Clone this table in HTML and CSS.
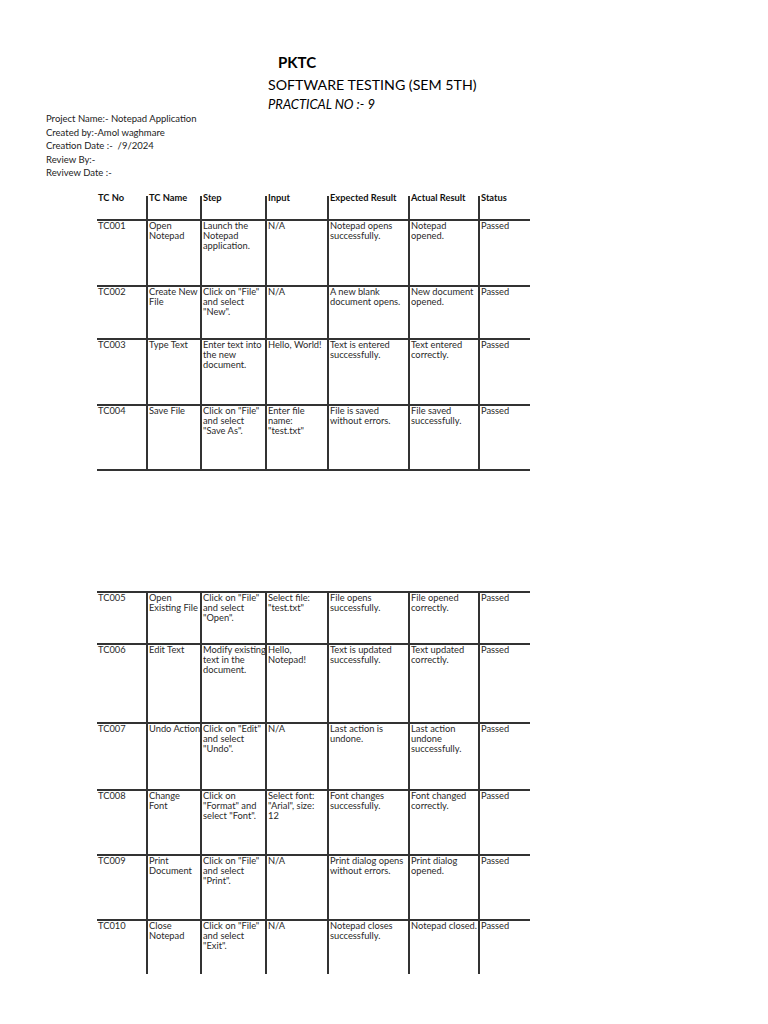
FILE: index.html
```html
<!DOCTYPE html>
<html lang="en">
<head>
<meta charset="utf-8">
<title>PKTC - Software Testing Practical 9</title>
<link rel="stylesheet" href="styles.css">
</head>
<body>
<div class="page">
  <header class="titles">
    <div class="org">PKTC</div>
    <div class="subject">SOFTWARE TESTING (SEM 5TH)</div>
    <div class="practical">PRACTICAL NO :- 9</div>
  </header>

  <div class="info">
    <div>Project Name:- Notepad Application</div>
    <div>Created by:-Amol waghmare</div>
    <div>Creation Date :-&nbsp; /9/2024</div>
    <div>Review By:-</div>
    <div>Revivew Date :-</div>
  </div>

  <div class="sheet first">
    <div class="row head">
      <div class="cell"><span>TC No</span></div>
      <div class="cell"><span>TC Name</span></div>
      <div class="cell"><span>Step</span></div>
      <div class="cell"><span>Input</span></div>
      <div class="cell"><span>Expected Result</span></div>
      <div class="cell"><span>Actual Result</span></div>
      <div class="cell"><span>Status</span></div>
    </div>
    <div class="row h66">
      <div class="cell">TC001</div>
      <div class="cell">Open<br>Notepad</div>
      <div class="cell">Launch the<br>Notepad<br>application.</div>
      <div class="cell">N/A</div>
      <div class="cell">Notepad opens<br>successfully.</div>
      <div class="cell">Notepad<br>opened.</div>
      <div class="cell">Passed</div>
    </div>
    <div class="row h53">
      <div class="cell">TC002</div>
      <div class="cell">Create New<br>File</div>
      <div class="cell">Click on &quot;File&quot;<br>and select<br>&quot;New&quot;.</div>
      <div class="cell">N/A</div>
      <div class="cell">A new blank<br>document opens.</div>
      <div class="cell">New document<br>opened.</div>
      <div class="cell">Passed</div>
    </div>
    <div class="row h66">
      <div class="cell">TC003</div>
      <div class="cell">Type Text</div>
      <div class="cell">Enter text into<br>the new<br>document.</div>
      <div class="cell">Hello, World!</div>
      <div class="cell">Text is entered<br>successfully.</div>
      <div class="cell">Text entered<br>correctly.</div>
      <div class="cell">Passed</div>
    </div>
    <div class="row h65">
      <div class="cell">TC004</div>
      <div class="cell">Save File</div>
      <div class="cell">Click on &quot;File&quot;<br>and select<br>&quot;Save As&quot;.</div>
      <div class="cell">Enter file<br>name:<br>&quot;test.txt&quot;</div>
      <div class="cell">File is saved<br>without errors.</div>
      <div class="cell">File saved<br>successfully.</div>
      <div class="cell">Passed</div>
    </div>
  </div>

  <div class="sheet second">
    <div class="row h52">
      <div class="cell">TC005</div>
      <div class="cell">Open<br>Existing File</div>
      <div class="cell">Click on &quot;File&quot;<br>and select<br>&quot;Open&quot;.</div>
      <div class="cell">Select file:<br>&quot;test.txt&quot;</div>
      <div class="cell">File opens<br>successfully.</div>
      <div class="cell">File opened<br>correctly.</div>
      <div class="cell">Passed</div>
    </div>
    <div class="row h79">
      <div class="cell">TC006</div>
      <div class="cell">Edit Text</div>
      <div class="cell">Modify existing<br>text in the<br>document.</div>
      <div class="cell">Hello,<br>Notepad!</div>
      <div class="cell">Text is updated<br>successfully.</div>
      <div class="cell">Text updated<br>correctly.</div>
      <div class="cell">Passed</div>
    </div>
    <div class="row h67">
      <div class="cell">TC007</div>
      <div class="cell">Undo Action</div>
      <div class="cell">Click on &quot;Edit&quot;<br>and select<br>&quot;Undo&quot;.</div>
      <div class="cell">N/A</div>
      <div class="cell">Last action is<br>undone.</div>
      <div class="cell">Last action<br>undone<br>successfully.</div>
      <div class="cell">Passed</div>
    </div>
    <div class="row h65">
      <div class="cell">TC008</div>
      <div class="cell">Change<br>Font</div>
      <div class="cell">Click on<br>&quot;Format&quot; and<br>select &quot;Font&quot;.</div>
      <div class="cell">Select font:<br>&quot;Arial&quot;, size:<br>12</div>
      <div class="cell">Font changes<br>successfully.</div>
      <div class="cell">Font changed<br>correctly.</div>
      <div class="cell">Passed</div>
    </div>
    <div class="row h65">
      <div class="cell">TC009</div>
      <div class="cell">Print<br>Document</div>
      <div class="cell">Click on &quot;File&quot;<br>and select<br>&quot;Print&quot;.</div>
      <div class="cell">N/A</div>
      <div class="cell">Print dialog opens<br>without errors.</div>
      <div class="cell">Print dialog<br>opened.</div>
      <div class="cell">Passed</div>
    </div>
    <div class="row h53 last">
      <div class="cell">TC010</div>
      <div class="cell">Close<br>Notepad</div>
      <div class="cell">Click on &quot;File&quot;<br>and select<br>&quot;Exit&quot;.</div>
      <div class="cell">N/A</div>
      <div class="cell">Notepad closes<br>successfully.</div>
      <div class="cell">Notepad closed.</div>
      <div class="cell">Passed</div>
    </div>
  </div>
</div>
</body>
</html>
```

FILE: styles.css
```css
* { box-sizing: border-box; }

html, body {
  margin: 0;
  padding: 0;
  background: #ffffff;
}

body {
  font-family: Lato, "Open Sans", "Liberation Sans", sans-serif;
  color: #222;
}

.page {
  width: 768px;
  min-height: 1024px;
  padding-top: 53px;
}

.titles {
  padding-left: 268px;
  color: #000;
}

.org {
  font-size: 15px;
  font-weight: 700;
  line-height: 18px;
  padding-left: 10px;
}

.subject {
  margin-top: 4px;
  font-size: 14.2px;
  line-height: 20px;
}

.practical {
  margin-top: 1px;
  font-size: 13px;
  line-height: 16px;
  font-style: italic;
}

.info {
  padding-left: 46px;
  font-size: 9.5px;
  line-height: 13.5px;
  color: #222;
}

.sheet {
  margin-left: 97px;
  width: 433px;
  font-size: 9.3px;
  line-height: 10.3px;
  color: #2a2a2a;
}

.sheet.first {
  margin-top: 16px;
}

.sheet.second {
  margin-top: 120px;
  border-top: 2px solid #333;
}

.row {
  display: grid;
  grid-template-columns: 49px 54px 65px 62px 81px 70px 52px;
  border-bottom: 2px solid #333;
}

.row.last {
  border-bottom: none;
}

.cell {
  white-space: nowrap;
  padding-left: 1px;
}

.cell + .cell {
  border-left: 2px solid #333;
}

.head {
  height: 25px;
  font-weight: 700;
  color: #111;
}

.head .cell > span {
  display: block;
  margin-top: -3px;
}

.h52 { height: 52px; }
.h53 { height: 53px; }
.h65 { height: 65px; }
.h66 { height: 66px; }
.h67 { height: 67px; }
.h79 { height: 79px; }
```
